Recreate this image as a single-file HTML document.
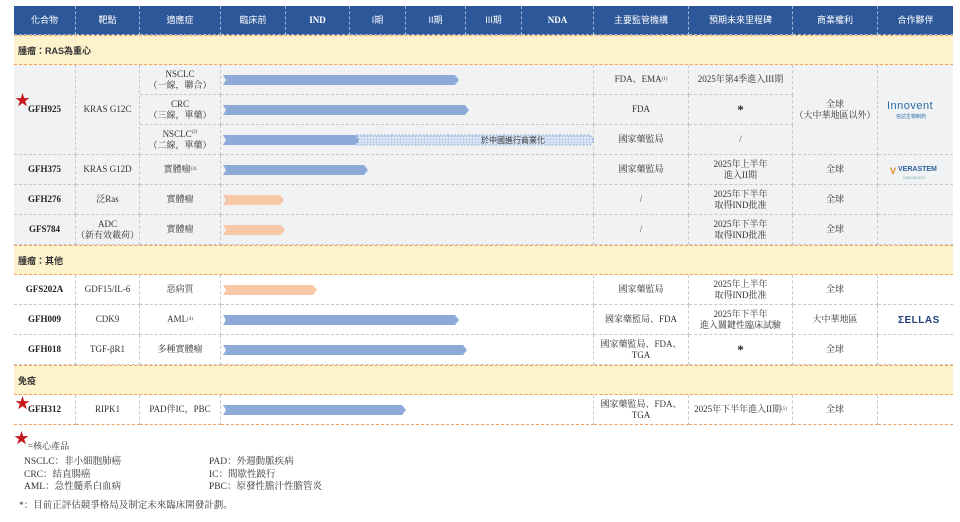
<!DOCTYPE html>
<html><head><meta charset="utf-8">
<style>
*{margin:0;padding:0;box-sizing:border-box}
body{width:960px;height:522px;background:#fff;position:relative;overflow:hidden;font-family:"Liberation Serif","Noto Serif CJK SC","Noto Sans CJK TC",serif;color:#333;font-size:9px}
.c{position:absolute;display:flex;align-items:center;justify-content:center;text-align:center;line-height:11px;border-right:1px dashed #c8c8c8;border-bottom:1px dashed #c8c8c8;white-space:nowrap}
.h{background:#2c5799;color:#fff;font-family:"Liberation Sans","Noto Sans CJK TC",sans-serif;font-size:9px;border-right:1px dashed #9fb3d6;border-bottom:1px dashed #9fb3d6}
.g{background:#f1f2f4}
.w{background:#fff}
.s{position:absolute;left:14px;width:939px;height:30px;background:#fdf2cc;border-top:1px dashed #f0a060;border-bottom:1px dashed #f0a060;font-family:"Liberation Sans","Noto Sans CJK TC",sans-serif;font-weight:bold;font-size:9px;color:#333;display:flex;align-items:center;padding-left:4px}
b{font-weight:bold;color:#222}
sup{font-size:5px;line-height:0}
.star{position:absolute;color:#c8161d;font-size:15px;line-height:15px}
svg{position:absolute}
.lg{position:absolute;font-family:"Liberation Sans","Noto Sans CJK TC",sans-serif}
</style></head><body>
<div class="c h" style="left:14px;top:6px;width:62px;height:29px">化合物</div>
<div class="c h" style="left:76px;top:6px;width:64px;height:29px">靶點</div>
<div class="c h" style="left:140px;top:6px;width:81px;height:29px">適應症</div>
<div class="c h" style="left:221px;top:6px;width:65px;height:29px">臨床前</div>
<div class="c h" style="left:286px;top:6px;width:64px;height:29px;font-family:'Liberation Serif',serif;font-weight:bold">IND</div>
<div class="c h" style="left:350px;top:6px;width:56px;height:29px">I期</div>
<div class="c h" style="left:406px;top:6px;width:60px;height:29px">II期</div>
<div class="c h" style="left:466px;top:6px;width:56px;height:29px">III期</div>
<div class="c h" style="left:522px;top:6px;width:72px;height:29px;font-family:'Liberation Serif',serif;font-weight:bold">NDA</div>
<div class="c h" style="left:594px;top:6px;width:95px;height:29px">主要監管機構</div>
<div class="c h" style="left:689px;top:6px;width:104px;height:29px">預期未來里程碑</div>
<div class="c h" style="left:793px;top:6px;width:85px;height:29px">商業權利</div>
<div class="c h" style="left:878px;top:6px;width:75px;height:29px;border-right:none">合作夥伴</div>

<div class="s" style="top:35px">腫瘤：RAS為重心</div>

<div class="c g" style="left:14px;top:65px;width:62px;height:90px"><b>GFH925</b></div>
<div class="star" style="left:15px;top:94px">★</div>
<div class="c g" style="left:76px;top:65px;width:64px;height:90px">KRAS G12C</div>
<div class="c g" style="left:140px;top:65px;width:81px;height:30px">NSCLC<br>（一線，聯合）</div>
<div class="c g" style="left:140px;top:95px;width:81px;height:30px">CRC<br>（三線，單藥）</div>
<div class="c g" style="left:140px;top:125px;width:81px;height:30px"><span>NSCLC<sup>(2)</sup><br>（二線，單藥）</span></div>
<div class="c g" style="left:221px;top:65px;width:373px;height:30px"></div>
<div class="c g" style="left:221px;top:95px;width:373px;height:30px"></div>
<div class="c g" style="left:221px;top:125px;width:373px;height:30px"></div>
<div class="c g" style="left:594px;top:65px;width:95px;height:30px">FDA、EMA<sup>(1)</sup></div>
<div class="c g" style="left:594px;top:95px;width:95px;height:30px">FDA</div>
<div class="c g" style="left:594px;top:125px;width:95px;height:30px">國家藥監局</div>
<div class="c g" style="left:689px;top:65px;width:104px;height:30px">2025年第4季進入III期</div>
<div class="c g" style="left:689px;top:95px;width:104px;height:30px;font-size:13px"><b>*</b></div>
<div class="c g" style="left:689px;top:125px;width:104px;height:30px">/</div>
<div class="c g" style="left:793px;top:65px;width:85px;height:90px">全球<br>（大中華地區以外）</div>
<div class="c g" style="left:878px;top:65px;width:75px;height:90px;border-right:none"></div>
<div class="lg" style="left:887px;top:100px;font-size:11px;color:#2a6aa8;letter-spacing:0.5px">Innovent</div>
<div class="lg" style="left:896px;top:113px;font-size:5px;color:#2a6aa8">信达生物制药</div>

<div class="c g" style="left:14px;top:155px;width:62px;height:30px"><b>GFH375</b></div>
<div class="c g" style="left:76px;top:155px;width:64px;height:30px">KRAS G12D</div>
<div class="c g" style="left:140px;top:155px;width:81px;height:30px">實體瘤<sup>(3)</sup></div>
<div class="c g" style="left:221px;top:155px;width:373px;height:30px"></div>
<div class="c g" style="left:594px;top:155px;width:95px;height:30px">國家藥監局</div>
<div class="c g" style="left:689px;top:155px;width:104px;height:30px">2025年上半年<br>進入II期</div>
<div class="c g" style="left:793px;top:155px;width:85px;height:30px">全球</div>
<div class="c g" style="left:878px;top:155px;width:75px;height:30px;border-right:none"></div>
<div class="lg" style="left:890px;top:166px;font-size:9px;color:#e08a2a;font-weight:bold">V</div>
<div class="lg" style="left:898px;top:166px;font-size:7px;color:#2f5f9a;font-weight:bold">VERASTEM</div>
<div class="lg" style="left:903px;top:175px;font-size:4px;color:#6ab0a0">ONCOLOGY</div>

<div class="c g" style="left:14px;top:185px;width:62px;height:30px"><b>GFH276</b></div>
<div class="c g" style="left:76px;top:185px;width:64px;height:30px">泛Ras</div>
<div class="c g" style="left:140px;top:185px;width:81px;height:30px">實體瘤</div>
<div class="c g" style="left:221px;top:185px;width:373px;height:30px"></div>
<div class="c g" style="left:594px;top:185px;width:95px;height:30px">/</div>
<div class="c g" style="left:689px;top:185px;width:104px;height:30px">2025年下半年<br>取得IND批准</div>
<div class="c g" style="left:793px;top:185px;width:85px;height:30px">全球</div>
<div class="c g" style="left:878px;top:185px;width:75px;height:30px;border-right:none"></div>

<div class="c g" style="left:14px;top:215px;width:62px;height:30px"><b>GFS784</b></div>
<div class="c g" style="left:76px;top:215px;width:64px;height:30px">ADC<br>（新有效載荷）</div>
<div class="c g" style="left:140px;top:215px;width:81px;height:30px">實體瘤</div>
<div class="c g" style="left:221px;top:215px;width:373px;height:30px"></div>
<div class="c g" style="left:594px;top:215px;width:95px;height:30px">/</div>
<div class="c g" style="left:689px;top:215px;width:104px;height:30px">2025年下半年<br>取得IND批准</div>
<div class="c g" style="left:793px;top:215px;width:85px;height:30px">全球</div>
<div class="c g" style="left:878px;top:215px;width:75px;height:30px;border-right:none"></div>

<div class="s" style="top:245px">腫瘤：其他</div>

<div class="c w" style="left:14px;top:275px;width:62px;height:30px"><b>GFS202A</b></div>
<div class="c w" style="left:76px;top:275px;width:64px;height:30px">GDF15/IL-6</div>
<div class="c w" style="left:140px;top:275px;width:81px;height:30px">惡病質</div>
<div class="c w" style="left:221px;top:275px;width:373px;height:30px"></div>
<div class="c w" style="left:594px;top:275px;width:95px;height:30px">國家藥監局</div>
<div class="c w" style="left:689px;top:275px;width:104px;height:30px">2025年上半年<br>取得IND批准</div>
<div class="c w" style="left:793px;top:275px;width:85px;height:30px">全球</div>
<div class="c w" style="left:878px;top:275px;width:75px;height:30px;border-right:none"></div>

<div class="c w" style="left:14px;top:305px;width:62px;height:30px"><b>GFH009</b></div>
<div class="c w" style="left:76px;top:305px;width:64px;height:30px">CDK9</div>
<div class="c w" style="left:140px;top:305px;width:81px;height:30px">AML<sup>(4)</sup></div>
<div class="c w" style="left:221px;top:305px;width:373px;height:30px"></div>
<div class="c w" style="left:594px;top:305px;width:95px;height:30px">國家藥監局、FDA</div>
<div class="c w" style="left:689px;top:305px;width:104px;height:30px">2025年下半年<br>進入關鍵性臨床試驗</div>
<div class="c w" style="left:793px;top:305px;width:85px;height:30px">大中華地區</div>
<div class="c w" style="left:878px;top:305px;width:75px;height:30px;border-right:none"></div>
<div class="lg" style="left:898px;top:315px;font-size:10px;color:#1f3f7a;font-weight:bold;letter-spacing:0.5px">ΣELLAS</div>

<div class="c w" style="left:14px;top:335px;width:62px;height:30px"><b>GFH018</b></div>
<div class="c w" style="left:76px;top:335px;width:64px;height:30px">TGF-βR1</div>
<div class="c w" style="left:140px;top:335px;width:81px;height:30px">多種實體瘤</div>
<div class="c w" style="left:221px;top:335px;width:373px;height:30px"></div>
<div class="c w" style="left:594px;top:335px;width:95px;height:30px">國家藥監局、FDA、<br>TGA</div>
<div class="c w" style="left:689px;top:335px;width:104px;height:30px;font-size:13px"><b>*</b></div>
<div class="c w" style="left:793px;top:335px;width:85px;height:30px">全球</div>
<div class="c w" style="left:878px;top:335px;width:75px;height:30px;border-right:none"></div>

<div class="s" style="top:365px">免疫</div>

<div class="c w" style="left:14px;top:395px;width:62px;height:30px;border-bottom:1px dashed #f0a060"><b>GFH312</b></div>
<div class="star" style="left:15px;top:397px">★</div>
<div class="c w" style="left:76px;top:395px;width:64px;height:30px;border-bottom:1px dashed #f0a060">RIPK1</div>
<div class="c w" style="left:140px;top:395px;width:81px;height:30px;border-bottom:1px dashed #f0a060">PAD伴IC，PBC</div>
<div class="c w" style="left:221px;top:395px;width:373px;height:30px;border-bottom:1px dashed #f0a060"></div>
<div class="c w" style="left:594px;top:395px;width:95px;height:30px;border-bottom:1px dashed #f0a060">國家藥監局、FDA、<br>TGA</div>
<div class="c w" style="left:689px;top:395px;width:104px;height:30px;border-bottom:1px dashed #f0a060">2025年下半年進入II期<sup>(5)</sup></div>
<div class="c w" style="left:793px;top:395px;width:85px;height:30px;border-bottom:1px dashed #f0a060">全球</div>
<div class="c w" style="left:878px;top:395px;width:75px;height:30px;border-right:none;border-bottom:1px dashed #f0a060"></div>

<svg width="960" height="522" style="left:0;top:0">
<defs><pattern id="dots" width="3" height="3" patternUnits="userSpaceOnUse"><rect width="3" height="3" fill="#dbe6f5"/><circle cx="1.5" cy="1.5" r="0.8" fill="#a9c2e6"/></pattern></defs>
<g fill="#8eaad9">
<polygon points="223,75 455,75 459,80 455,85 223,85 226,80"/>
<polygon points="223,105 465,105 469,110 465,115 223,115 226,110"/>
<polygon points="223,135 355,135 359,140 355,145 223,145 226,140"/>
<polygon points="223,165 364,165 368,170 364,175 223,175 226,170"/>
<polygon points="223,315 455,315 459,320 455,325 223,325 226,320"/>
<polygon points="223,345 463,345 467,350 463,355 223,355 226,350"/>
<polygon points="223,405 402,405 406,410 402,415 223,415 226,410"/>
</g>
<polygon points="356,135 590,135 594,140 590,145 356,145 359,140" fill="url(#dots)" stroke="#6e95d0" stroke-width="0.8" stroke-dasharray="2,1.5"/>
<g fill="#f6c8a6">
<polygon points="223,195 280,195 284,200 280,205 223,205 226,200"/>
<polygon points="223,225 281,225 285,230 281,235 223,235 226,230"/>
<polygon points="223,285 313,285 317,290 313,295 223,295 226,290"/>
</g>
<text x="481" y="143" font-size="8" fill="#333" font-family="Noto Sans CJK TC,sans-serif">於中國進行商業化</text>
</svg>

<div class="star" style="left:14px;top:432px">★</div>
<div style="position:absolute;left:28px;top:439px;font-size:9px">=核心產品</div>
<div style="position:absolute;left:24px;top:456px;font-size:9.5px;line-height:12.5px">NSCLC：非小細胞肺癌<br>CRC：結直腸癌<br>AML：急性髓系白血病</div>
<div style="position:absolute;left:209px;top:456px;font-size:9.5px;line-height:12.5px">PAD：外週動脈疾病<br>IC：間歇性跛行<br>PBC：原發性膽汁性膽管炎</div>
<div style="position:absolute;left:19px;top:497px;font-size:9.5px">*：目前正評估競爭格局及制定未來臨床開發計劃。</div>
</body></html>
